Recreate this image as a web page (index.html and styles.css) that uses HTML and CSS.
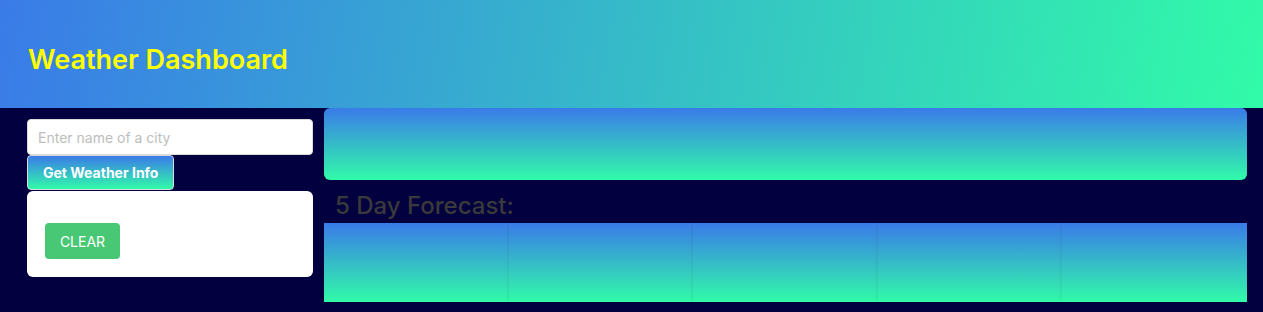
FILE: index.html
```html
<!DOCTYPE html>
<html lang="en">
<head>
  <meta charset="UTF-8">
  <title>Weather Dashboard</title>
  <link rel="stylesheet" href="styles.css">
</head>
<body>

  <header class="hero">
    <h1 class="title">Weather Dashboard</h1>
  </header>

  <main class="dashboard">
    <aside class="sidebar">
      <input id="cityInput" class="city-input" type="text" placeholder="Enter name of a city">
      <div>
        <button id="searchBtn" class="search-btn">Get Weather Info</button>
      </div>
      <div class="history-box">
        <ul id="history" class="history"></ul>
        <button id="clearBtn" class="clear-btn">CLEAR</button>
      </div>
    </aside>

    <section class="content">
      <div id="current" class="current-card"></div>
      <h2 class="forecast-title">5 Day Forecast:</h2>
      <div id="forecast" class="forecast-row">
        <div class="forecast-card"></div>
        <div class="forecast-card"></div>
        <div class="forecast-card"></div>
        <div class="forecast-card"></div>
        <div class="forecast-card"></div>
      </div>
    </section>
  </main>

</body>
</html>
```

FILE: styles.css
```css
* {
  margin: 0;
  padding: 0;
  box-sizing: border-box;
  font-family: "Inter", "Liberation Sans", sans-serif;
}

body {
  background-color: #02003f;
  min-height: 100vh;
}

.hero {
  height: 108px;
  background: linear-gradient(100deg, #3a7be8, #31fba8);
  display: flex;
  align-items: center;
  padding-left: 28px;
}

.title {
  color: #ffff00;
  font-size: 27px;
  font-weight: 600;
  padding-top: 10px;
}

.dashboard {
  display: flex;
  gap: 11px;
  padding: 0 16px 0 27px;
}

.sidebar {
  width: 286px;
  flex-shrink: 0;
  padding-top: 11px;
}

.city-input {
  width: 100%;
  height: 36px;
  padding: 0 10px;
  font-size: 14px;
  border: 1px solid #dbdbdb;
  border-radius: 4px;
  background: #fff;
}

.city-input::placeholder {
  color: #bdbdbd;
}

.search-btn {
  height: 35px;
  padding: 0 15px;
  font-size: 14px;
  font-weight: 700;
  color: #fff;
  background: linear-gradient(to bottom, #3a7be8, #31fba8);
  border: 1px solid #dbdbdb;
  border-radius: 4px;
  cursor: pointer;
}

.history-box {
  background: #fff;
  border-radius: 6px;
  height: 86px;
  padding: 32px 18px 0;
  margin-top: 1px;
}

.history {
  list-style: none;
}

.clear-btn {
  height: 36px;
  width: 75px;
  font-size: 14px;
  color: #fff;
  background-color: #48c774;
  border: none;
  border-radius: 4px;
  cursor: pointer;
}

.content {
  flex: 1;
}

.current-card {
  height: 72px;
  border-radius: 6px;
  background: linear-gradient(to bottom, #3a7be8, #31fba8);
}

.forecast-title {
  color: #3a3a3a;
  font-size: 24px;
  font-weight: 500;
  line-height: 26px;
  padding: 13px 0 4px 11px;
}

.forecast-row {
  display: flex;
}

.forecast-card {
  flex: 1;
  height: 79px;
  background: linear-gradient(to bottom, #3a7be8, #31fba8);
  box-shadow: -1px 0 3px rgba(0, 0, 0, 0.08);
}
```
